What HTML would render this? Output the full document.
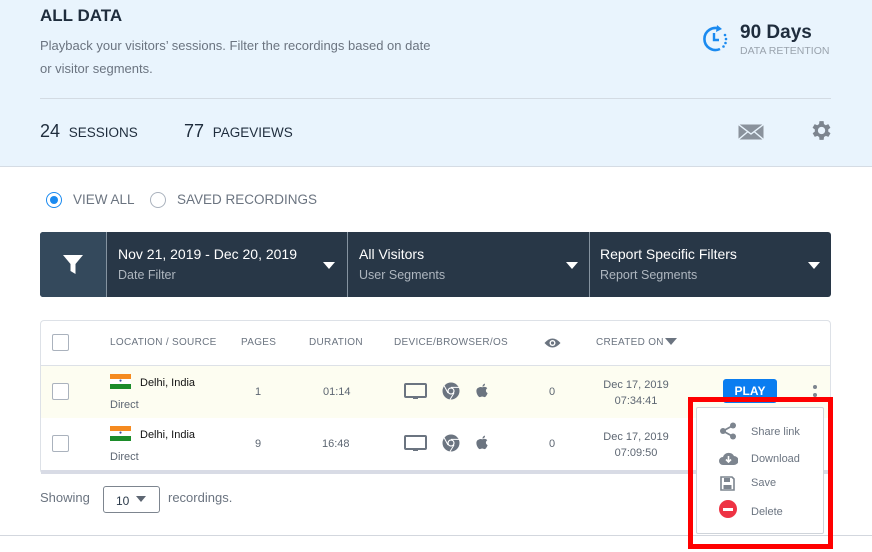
<!DOCTYPE html><html><head><style>
*{box-sizing:border-box;margin:0;padding:0}
body{width:872px;height:552px;overflow:hidden;background:#fff;font-family:"Liberation Sans",sans-serif;position:relative;color:#2b3a4a}
.a{position:absolute}
.hdr{left:0;top:0;width:872px;height:167px;background:#e9f4fd;border-bottom:1px solid #d5dce4}
.gray{color:#6b7480}
.th{font-size:10px;letter-spacing:.3px;color:#6b7480;top:337px;white-space:nowrap}
.cb{width:17px;height:17px;border:1px solid #aab2bd;border-radius:2px;background:#fff}
.cell{font-size:11px;color:#5d6672;white-space:nowrap}
.fb{top:232px;height:65px;background:#283747}
.ft{color:#fff;font-size:14px}
.fs{color:#aeb6bf;font-size:12.5px}
.car{width:0;height:0;border-left:6px solid transparent;border-right:6px solid transparent;border-top:7px solid #fff}
</style></head><body>
<div class="a hdr"></div>
<div class="a" style="left:40px;top:6px;font-size:17px;font-weight:bold;color:#1f2d3d">ALL DATA</div>
<div class="a gray" style="left:40px;top:34px;font-size:13px;line-height:23px;width:440px">Playback your visitors’ sessions. Filter the recordings based on date<br>or visitor segments.</div>
<svg class="a" style="left:700px;top:24px" width="32" height="30" viewBox="0 0 32 30"><path d="M20 5 A11 11 0 1 0 20 25" fill="none" stroke="#1a8af0" stroke-width="2.6"/><path d="M17 1 L22 5 L16 8Z" fill="#1a8af0"/><path d="M14 9V16H19" fill="none" stroke="#1a8af0" stroke-width="2.4"/><circle cx="25" cy="11" r="1.3" fill="#1a8af0"/><circle cx="26" cy="15" r="1.3" fill="#1a8af0"/><circle cx="25.5" cy="19" r="1.3" fill="#1a8af0"/><circle cx="23.5" cy="22.5" r="1.3" fill="#1a8af0"/></svg>
<div class="a" style="left:740px;top:22px;font-size:19px;font-weight:bold;color:#1f2d3d">90 Days</div>
<div class="a" style="left:740px;top:45px;font-size:10.5px;color:#9aa3ad">DATA RETENTION</div>
<div class="a" style="left:40px;top:98px;width:791px;height:1px;background:#d3dbe3"></div>
<div class="a" style="left:40px;top:121px;font-size:18px;color:#1f2d3d">24 <span style="font-size:13.5px">&nbsp;SESSIONS</span></div>
<div class="a" style="left:184px;top:121px;font-size:18px;color:#1f2d3d">77 <span style="font-size:13.5px">&nbsp;PAGEVIEWS</span></div>
<svg class="a" style="left:738px;top:124px" width="26" height="16"><rect x="0.5" y="0.5" width="25" height="15" fill="#8a929c"/><path d="M0.5 0.5L13 10L25.5 0.5M0.5 15.5L10 7.5M25.5 15.5L16 7.5" stroke="#e9f4fd" stroke-width="1.4" fill="none"/></svg>
<svg class="a" style="left:808px;top:118px" width="25" height="25" viewBox="0 0 24 24"><path fill="#7d858f" d="M19.4 13a7.5 7.5 0 000-2l2.1-1.6-2-3.5-2.5 1a7.3 7.3 0 00-1.7-1L15 3h-4l-.4 2.9a7.3 7.3 0 00-1.7 1l-2.5-1-2 3.5L6.6 11a7.5 7.5 0 000 2l-2.1 1.6 2 3.5 2.5-1a7.3 7.3 0 001.7 1L11 21h4l.4-2.9a7.3 7.3 0 001.7-1l2.5 1 2-3.5zM13 15.5a3.5 3.5 0 110-7 3.5 3.5 0 010 7z"/></svg>

<div class="a" style="left:46px;top:192px;width:16px;height:16px;border-radius:50%;border:1.5px solid #1a8af0;background:#fff"><div style="margin:2.5px;width:8px;height:8px;border-radius:50%;background:#1a8af0"></div></div>
<div class="a gray" style="left:73px;top:192px;font-size:13.5px">VIEW ALL</div>
<div class="a" style="left:150px;top:192px;width:16px;height:16px;border-radius:50%;border:1px solid #aab2bd"></div>
<div class="a gray" style="left:177px;top:192px;font-size:13.5px">SAVED RECORDINGS</div>

<div class="a fb" style="left:40px;width:791px;border-radius:3px"></div>
<div class="a" style="left:40px;top:232px;width:66px;height:65px;background:#34495c;border-radius:3px 0 0 3px"></div>
<svg class="a" style="left:63px;top:255px" width="20" height="19"><path d="M0 0H20L12.5 9V19L7.5 16V9Z" fill="#fff"/></svg>
<div class="a" style="left:106px;top:232px;width:1px;height:65px;background:#8593a0"></div>
<div class="a" style="left:347px;top:232px;width:1px;height:65px;background:#8593a0"></div>
<div class="a" style="left:589px;top:232px;width:1px;height:65px;background:#8593a0"></div>
<div class="a ft" style="left:118px;top:246px">Nov 21, 2019 - Dec 20, 2019</div><div class="a fs" style="left:118px;top:268px">Date Filter</div><div class="a car" style="left:323px;top:262px"></div>
<div class="a ft" style="left:359px;top:246px">All Visitors</div><div class="a fs" style="left:359px;top:268px">User Segments</div><div class="a car" style="left:566px;top:262px"></div>
<div class="a ft" style="left:600px;top:246px">Report Specific Filters</div><div class="a fs" style="left:600px;top:268px">Report Segments</div><div class="a car" style="left:808px;top:262px"></div>

<div class="a" style="left:40px;top:320px;width:791px;height:154px;border:1px solid #dde1e7;border-radius:4px;border-bottom:none"></div>
<div class="a" style="left:41px;top:365px;width:789px;height:1px;background:#dde1e7"></div>
<div class="a" style="left:41px;top:366px;width:789px;height:52px;background:#fdfdf1"></div>
<div class="a" style="left:41px;top:470px;width:789px;height:4px;background:#d8dbe5"></div>
<div class="a cb" style="left:52px;top:334px"></div>
<div class="a th" style="left:110px">LOCATION / SOURCE</div>
<div class="a th" style="left:241px">PAGES</div>
<div class="a th" style="left:309px">DURATION</div>
<div class="a th" style="left:394px">DEVICE/BROWSER/OS</div>
<svg class="a" style="left:544px;top:337px" width="17" height="12"><path d="M0.5 6Q8.5-3 16.5 6Q8.5 15 0.5 6Z" fill="#6b7480"/><circle cx="8.5" cy="6" r="3" fill="#fff"/><circle cx="8.5" cy="6" r="1.6" fill="#6b7480"/></svg>
<div class="a th" style="left:596px">CREATED ON</div>
<div class="a" style="left:665px;top:338px;border-left:6px solid transparent;border-right:6px solid transparent;border-top:7px solid #6b7480"></div>

<div class="a cb" style="left:52px;top:383px"></div>
<div class="a cb" style="left:52px;top:435px"></div>
<div class="a" style="left:110px;top:374px;width:21px;height:15px"><div style="height:5px;background:#f58a1f"></div><div style="height:5px;background:#fff;text-align:center;font-size:5px;line-height:5px;color:#3a4fa0">●</div><div style="height:5px;background:#1c8c2a"></div></div>
<div class="a" style="left:110px;top:426px;width:21px;height:15px"><div style="height:5px;background:#f58a1f"></div><div style="height:5px;background:#fff;text-align:center;font-size:5px;line-height:5px;color:#3a4fa0">●</div><div style="height:5px;background:#1c8c2a"></div></div>
<div class="a" style="left:140px;top:377px;font-size:11px;color:#111">Delhi, India</div>
<div class="a" style="left:140px;top:429px;font-size:11px;color:#111">Delhi, India</div>
<div class="a cell" style="left:110px;top:399px">Direct</div>
<div class="a cell" style="left:110px;top:451px">Direct</div>
<div class="a cell" style="left:255px;top:386px">1</div><div class="a cell" style="left:255px;top:438px">9</div>
<div class="a cell" style="left:323px;top:386px">01:14</div><div class="a cell" style="left:322px;top:438px">16:48</div>
<div class="a cell" style="left:549px;top:386px">0</div><div class="a cell" style="left:549px;top:438px">0</div>
<div class="a cell" style="left:596px;top:377px;text-align:center;width:80px;line-height:16px">Dec 17, 2019<br>07:34:41</div>
<div class="a cell" style="left:596px;top:429px;text-align:center;width:80px;line-height:16px">Dec 17, 2019<br>07:09:50</div>
<svg class="a" style="left:404px;top:382px" width="90" height="20"><g id="ic"><rect x="1" y="2" width="21" height="13" rx="1" fill="none" stroke="#6b7480" stroke-width="2"/><rect x="9" y="15" width="5" height="2" fill="#6b7480"/><circle cx="47" cy="9" r="8.5" fill="#6b7480"/><circle cx="47" cy="9" r="3.6" fill="#fff"/><circle cx="47" cy="9" r="2.4" fill="#6b7480"/><path d="M47 5.4H55M44 11L40 3.5M50 11L46 17.5" stroke="#fff" stroke-width="1"/><path d="M75 5.5c1.2-1 2.5-.3 3.5-.3s2.2-.8 3.6 0c.6.3 1 .8 1.2 1.1-2 1.2-1.8 4 .3 4.8-.6 1.8-1.8 4-3 4-1 0-1.4-.6-2.4-.6s-1.4.6-2.4.6c-1.5 0-3.4-3.6-3.4-6 0-1.8.7-3 2.6-3.6zM78.5 4.6c0-1.6 1.1-2.8 2.5-3 .1 1.6-1.1 3-2.5 3z" fill="#6b7480"/></g></svg>
<svg class="a" style="left:404px;top:434px" width="90" height="20"><use href="#ic"/></svg>
<div class="a" style="left:723px;top:379px;width:54px;height:24px;background:#0a7df0;border-radius:3px;color:#fff;font-size:12px;font-weight:bold;text-align:center;line-height:24px">PLAY</div>
<div class="a" style="left:813px;top:385px;width:4px;height:4px;border-radius:50%;background:#7d858f"></div>
<div class="a" style="left:813px;top:393px;width:4px;height:4px;border-radius:50%;background:#7d858f"></div>

<div class="a gray" style="left:40px;top:490px;font-size:13px">Showing</div>
<div class="a" style="left:103px;top:486px;width:57px;height:27px;border:1px solid #7d858f;border-radius:3px;font-size:12px;color:#2b3a4a;padding:7px 0 0 12px">10</div>
<div class="a" style="left:136px;top:496px;border-left:5px solid transparent;border-right:5px solid transparent;border-top:6px solid #5d6672"></div>
<div class="a gray" style="left:168px;top:490px;font-size:13px">recordings.</div>
<div class="a" style="left:0;top:535px;width:872px;height:1px;background:#d3d7de"></div>

<div class="a" style="left:688px;top:397px;width:145px;height:152px;border:5px solid #f00"></div>
<div class="a" style="left:696px;top:407px;width:128px;height:127px;background:#fff;border:1px solid #cfd4da;border-radius:2px"></div>
<svg class="a" style="left:719px;top:422px" width="18" height="18"><circle cx="14" cy="3.5" r="3" fill="#7d858f"/><circle cx="4" cy="9" r="3" fill="#7d858f"/><circle cx="14" cy="14.5" r="3" fill="#7d858f"/><path d="M14 3.5L4 9L14 14.5" stroke="#7d858f" stroke-width="1.8" fill="none"/></svg>
<svg class="a" style="left:719px;top:451px" width="19" height="14"><path d="M4 14A4 4 0 014 6 6 6 0 0115 5 4.5 4.5 0 0115 14Z" fill="#7d858f"/><path d="M9.5 5V11M7 8.5L9.5 11L12 8.5" stroke="#fff" stroke-width="1.6" fill="none"/></svg>
<svg class="a" style="left:720px;top:476px" width="15" height="15"><path d="M1 1H12L14 3V14H1Z" fill="none" stroke="#7d858f" stroke-width="1.6"/><rect x="4" y="2" width="6" height="4" fill="#7d858f"/><rect x="3.5" y="9" width="8" height="4" fill="#7d858f"/></svg>
<div class="a" style="left:719px;top:500px;width:18px;height:18px;border-radius:50%;background:#ee3344"><div style="margin:7.5px 4px;height:3px;background:#fff"></div></div>
<div class="a gray" style="left:751px;top:426px;font-size:11px">Share link</div>
<div class="a gray" style="left:751px;top:453px;font-size:11px">Download</div>
<div class="a gray" style="left:751px;top:477px;font-size:11px">Save</div>
<div class="a gray" style="left:751px;top:506px;font-size:11px">Delete</div>
</body></html>
